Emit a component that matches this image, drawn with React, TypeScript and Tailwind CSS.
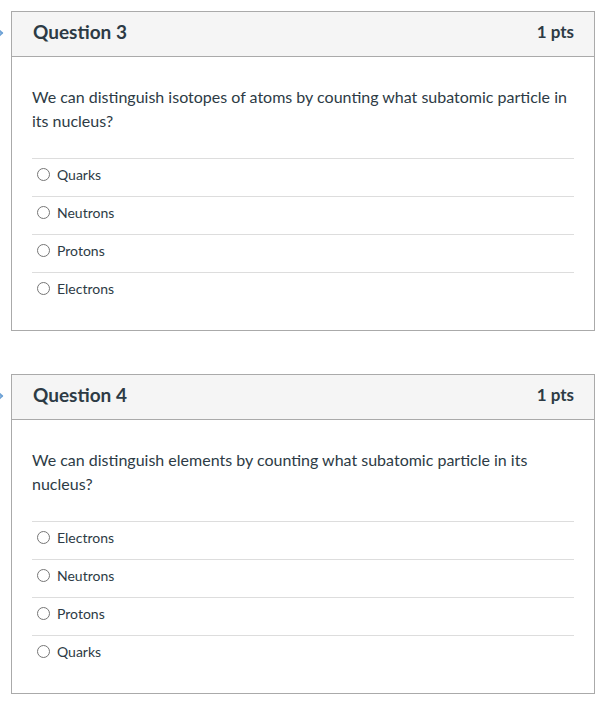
import React from 'react';

type Question = {
  title: string;
  points: string;
  text: string;
  answers: string[];
};

const questions: Question[] = [
  {
    title: 'Question 3',
    points: '1 pts',
    text: 'We can distinguish isotopes of atoms by counting what subatomic particle in its nucleus?',
    answers: ['Quarks', 'Neutrons', 'Protons', 'Electrons'],
  },
  {
    title: 'Question 4',
    points: '1 pts',
    text: 'We can distinguish elements by counting what subatomic particle in its nucleus?',
    answers: ['Electrons', 'Neutrons', 'Protons', 'Quarks'],
  },
];

function QuestionCard({ q }: { q: Question }) {
  return (
    <div className="relative">
      {/* partially hidden flag marker */}
      <div className="absolute -left-[15px] top-[19px] h-[6px] w-[6px] rotate-45 border-r-2 border-t-2 border-[#6fa3d6]" />
      <div className="border border-[#aaaaaa] bg-white">
        <div className="flex h-[45px] items-center justify-between border-b border-[#aaaaaa] bg-[#f5f5f5] pb-[4px] pl-[21px] pr-[20px]">
          <h2 className="text-[19px] font-bold text-[#2d3b45]">{q.title}</h2>
          <span className="text-[17px] font-bold text-[#2d3b45]">{q.points}</span>
        </div>
        <div className="px-[20px] pb-[20px] pt-[28px]">
          <p className="pr-[4px] text-[16px] leading-[24px] text-[#2d3b45]">{q.text}</p>
          <div className="mt-[25px]">
            {q.answers.map((a) => (
              <label
                key={a}
                className="flex h-[38px] items-center border-t border-[#dddddd] pb-[6px] pl-[5px] text-[14px] text-[#2d3b45]"
              >
                <span className="mr-[7px] h-[13px] w-[13px] rounded-full border border-[#767676] bg-white" />
                {a}
              </label>
            ))}
          </div>
        </div>
      </div>
    </div>
  );
}

export default function App() {
  return (
    <div
      className="min-h-[701px] bg-white pl-[11px] pt-[11px]"
      style={{ fontFamily: 'Lato, "Liberation Sans", sans-serif' }}
    >
      <div className="flex w-[584px] flex-col gap-[43px]">
        {questions.map((q) => (
          <QuestionCard key={q.title} q={q} />
        ))}
      </div>
    </div>
  );
}
